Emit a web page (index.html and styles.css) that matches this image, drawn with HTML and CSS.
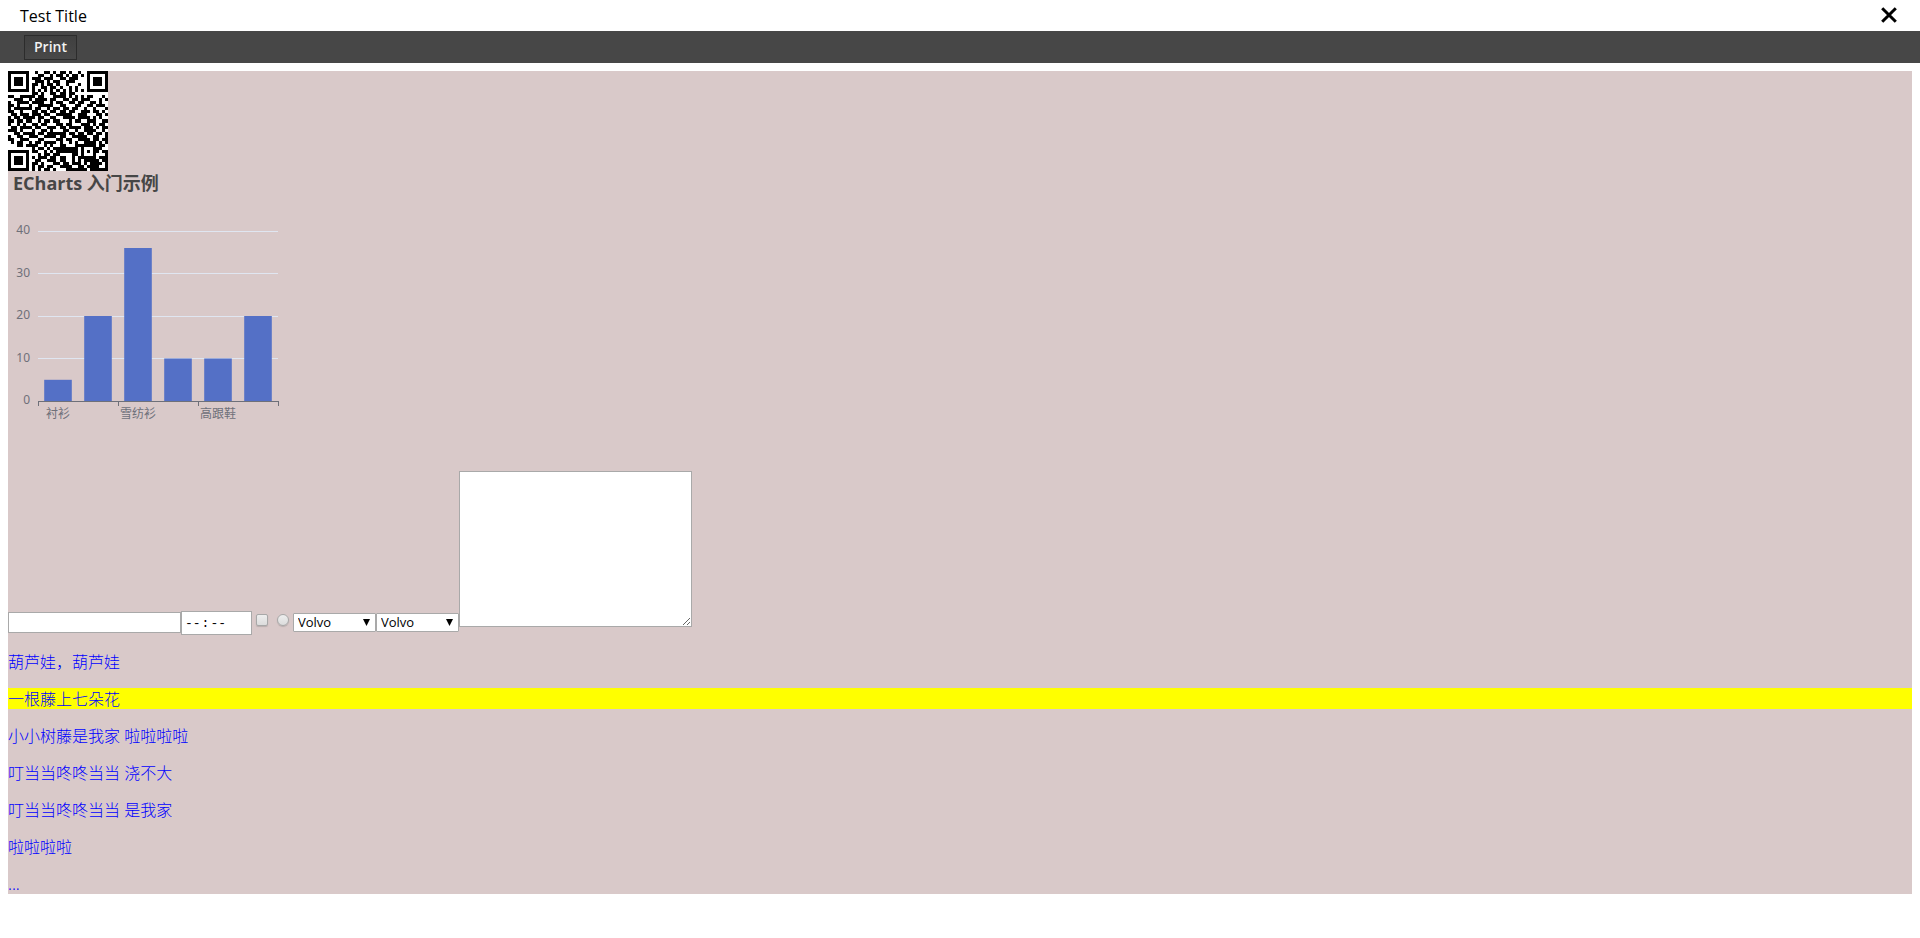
FILE: index.html
```html
<!DOCTYPE html>
<html lang="zh-CN">
<head>
<meta charset="utf-8">
<title>Test Title</title>
<link rel="stylesheet" href="styles.css">
</head>
<body>
<header class="titlebar">
  <h1 class="title">Test Title</h1>
  <button class="close" type="button" aria-label="Close">
    <svg width="16" height="16" viewBox="0 0 16 16"><path d="M1.2 1.2 14.8 14.8M14.8 1.2 1.2 14.8" stroke="#000" stroke-width="3"/></svg>
  </button>
</header>
<div class="toolbar"><button class="print" type="button">Print</button></div>
<main class="page">
  <svg class="qr" id="qr" width="100" height="100" viewBox="0 0 33 33" shape-rendering="crispEdges" role="img" aria-label="QR code"></svg>
  <svg class="chart" width="300" height="290" viewBox="0 0 300 290">
    <text class="chart-title" x="5" y="19">ECharts 入门示例</text>
    <path d="M30 60.5H270M30 102.5H270M30 145.5H270M30 187.5H270" stroke="#e0e6f1"/>
    <g class="axis-label" text-anchor="end">
      <text x="22" y="63">40</text><text x="22" y="106">30</text><text x="22" y="148">20</text><text x="22" y="191">10</text><text x="22" y="233">0</text>
    </g>
    <g fill="#5470c6">
      <rect x="36.2" y="208.8" width="27.6" height="21.2"/>
      <rect x="76.2" y="145" width="27.6" height="85"/>
      <rect x="116.2" y="77" width="27.6" height="153"/>
      <rect x="156.2" y="187.5" width="27.6" height="42.5"/>
      <rect x="196.2" y="187.5" width="27.6" height="42.5"/>
      <rect x="236.2" y="145" width="27.6" height="85"/>
    </g>
    <path d="M30 230.5H271M30.5 230V235M110.5 230V235M190.5 230V235M270.5 230V235" stroke="#6e7079" fill="none"/>
    <g class="axis-label" text-anchor="middle">
      <text x="50" y="247">衬衫</text><text x="130" y="247">雪纺衫</text><text x="210" y="247">高跟鞋</text>
    </g>
  </svg>
  <form class="controls">
    <input class="field text" type="text" aria-label="Text">
    <input class="field time" type="time" aria-label="Time">
    <input class="tick" type="checkbox" aria-label="Option">
    <input class="tick radio" type="radio" aria-label="Choice">
    <select class="field select" aria-label="Car"><option>Volvo</option><option>Saab</option></select>
    <select class="field select" aria-label="Second car"><option>Volvo</option><option>Saab</option></select>
    <textarea class="field area" aria-label="Notes"></textarea>
  </form>
  <p>葫芦娃，葫芦娃</p>
  <p class="marked">一根藤上七朵花</p>
  <p>小小树藤是我家 啦啦啦啦</p>
  <p>叮当当咚咚当当 浇不大</p>
  <p>叮当当咚咚当当 是我家</p>
  <p>啦啦啦啦</p>
  <p>...</p>
</main>
<script src="qr.js"></script>
</body>
</html>
```
FILE: styles.css
```css
body {
  margin: 0;
  background: #fff;
  font-family: "Noto Sans", "Noto Sans CJK SC", sans-serif;
}
.titlebar {
  display: flex;
  align-items: center;
  justify-content: space-between;
  height: 31px;
  padding: 0 23px 0 20px;
}
.title {
  margin: 0;
  font: 400 16px "Open Sans", sans-serif;
  color: #000;
}
.close {
  display: flex;
  padding: 0 0 1px;
  border: 0;
  background: none;
}
.toolbar {
  display: flex;
  align-items: center;
  height: 32px;
  padding: 0 24px;
  background: #474747;
}
.print {
  height: 25px;
  padding: 0 9px;
  border: 1px solid #2c2c2c;
  background: linear-gradient(#404040, #484848);
  color: #f2f2f2;
  font: 600 14px/20px "Open Sans", sans-serif;
}
.page {
  margin: 8px;
  background: #d9c9c9;
  color: #00f;
  font-weight: 300;
  font-size: 16px;
  line-height: 19px;
}
.qr,
.chart {
  display: block;
}
.qr {
  background: #fff;
}
.chart-title {
  font: 700 18px "Open Sans", "Noto Sans CJK SC", sans-serif;
  fill: #464646;
}
.axis-label {
  font: 400 12px "Noto Sans", "Noto Sans CJK SC", sans-serif;
  fill: #6e7079;
}
.controls {
  display: flex;
  align-items: flex-end;
  padding-top: 10px;
}
.field {
  box-sizing: border-box;
  margin: 0;
  border: 1px solid #a9a9a9;
  border-radius: 0;
  background: #fff;
  color: #000;
  font: 13px "Open Sans", sans-serif;
}
.text {
  width: 173px;
  height: 21px;
  margin-bottom: 2px;
}
.time {
  width: 71px;
  height: 24px;
  padding: 0 2px;
  font: 13px "Liberation Mono", monospace;
}
.time::-webkit-calendar-picker-indicator,
.time::-webkit-datetime-edit-ampm-field {
  display: none;
}
.tick {
  appearance: none;
  box-sizing: border-box;
  width: 12px;
  height: 12px;
  margin: 0 5px 9px 4px;
  border: 1px solid #a8a8a8;
  border-radius: 2px;
  background: linear-gradient(#eee, #dcdcdc);
  box-shadow: 0 1px 1px #b9adad;
}
.radio {
  margin-right: 4px;
  border-radius: 50%;
}
.select {
  appearance: none;
  width: 83px;
  height: 19px;
  margin-bottom: 3px;
  padding: 0 4px;
  border-radius: 1px;
  line-height: 17px;
  background: url("data:image/svg+xml,%3Csvg xmlns='http://www.w3.org/2000/svg' width='7' height='7'%3E%3Cpath d='M0 0h7L3.5 7z'/%3E%3C/svg%3E") no-repeat right 5px center, #fff;
}
.area {
  width: 233px;
  height: 156px;
  margin-bottom: 8px;
  resize: both;
}
p {
  margin: 16px 0 0;
  padding-top: 2px;
}
.marked {
  background: #ff0;
}
```
FILE: qr.js
```js
const rows = [
  "111111100100110101101001001111111",
  "100000100011001011010110101000001",
  "101110101110111001101110001011101",
  "101110100111010110011100001011101",
  "101110101101011010010001001011101",
  "100000101001101101001010001000001",
  "111111101010101010101010101111111",
  "000000001101001101101100000000000",
  "110011111011000111101010101100010",
  "001110010111101100110110111000101",
  "100111101111001011001101100110100",
  "110100010011111001100011001101110",
  "101111110110010110110110010010001",
  "110010001101101101101100111011010",
  "011011101110110011111001110001101",
  "101101111011001100111101111010100",
  "110110110010110110001011001110011",
  "100101001101100011011000111010110",
  "011011110110011101101111011101011",
  "111010001001101000110010011110010",
  "001101111011011111101101101101101",
  "100110011100111101100111110011001",
  "110011100011000011011001111011011",
  "010110010110111101001010011110101",
  "000110111100101001100011111110110",
  "000000001011010111111110100011100",
  "111111101100101011111110101011011",
  "100000100010110110000110100010001",
  "101110101011101101100101111110111",
  "101110100110011101100101011111011",
  "101110101101000110110111010111101",
  "100000101011011001111001101111001",
  "111111101010110100011111110111111"
];

let d = "";
rows.forEach((row, y) => [...row].forEach((cell, x) => {
  if (cell === "1") d += `M${x} ${y}h1v1h-1z`;
}));
const path = document.createElementNS("http://www.w3.org/2000/svg", "path");
path.setAttribute("d", d);
document.getElementById("qr").append(path);
```
